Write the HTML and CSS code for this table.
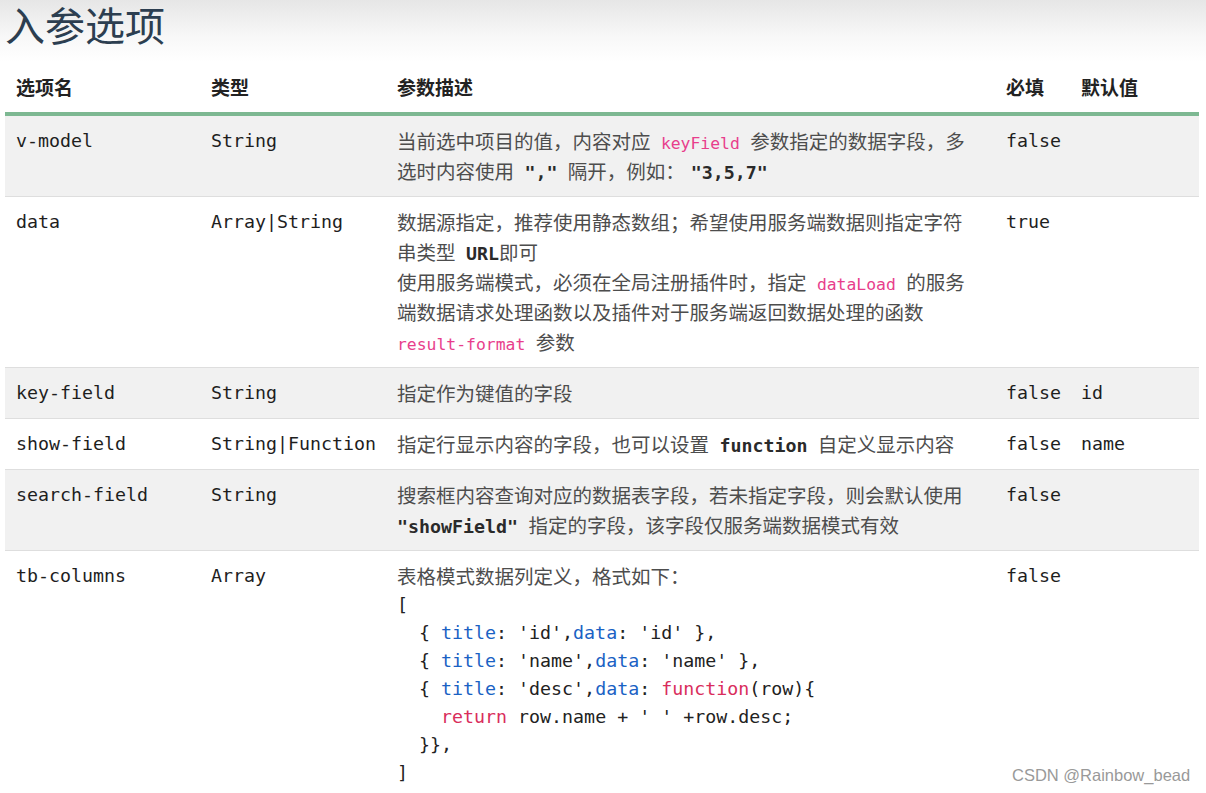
FILE: index.html
```html
<!DOCTYPE html>
<html lang="zh">
<head>
<meta charset="utf-8">
<title>入参选项</title>
<link rel="stylesheet" href="styles.css">
</head>
<body>
<div class="page">
  <h1 class="title">入参选项</h1>
  <table class="opts">
    <colgroup>
      <col class="w1"><col class="w2"><col class="w3"><col class="w4"><col class="w5">
    </colgroup>
    <thead>
      <tr><th>选项名</th><th>类型</th><th>参数描述</th><th>必填</th><th>默认值</th></tr>
    </thead>
    <tbody>
      <tr>
        <td class="mono">v-model</td>
        <td class="mono">String</td>
        <td class="desc">当前选中项目的值，内容对应 <code class="c">keyField</code> 参数指定的数据字段，多<br>选时内容使用 <code class="m">","</code> 隔开，例如：<code class="m">"3,5,7"</code></td>
        <td class="mono">false</td>
        <td class="mono"></td>
      </tr>
      <tr>
        <td class="mono">data</td>
        <td class="mono">Array|String</td>
        <td class="desc">数据源指定，推荐使用静态数组；希望使用服务端数据则指定字符<br>串类型 <code class="m last">URL</code>即可<br>使用服务端模式，必须在全局注册插件时，指定 <code class="c">dataLoad</code> 的服务<br>端数据请求处理函数以及插件对于服务端返回数据处理的函数<br><code class="c first">result-format</code> 参数</td>
        <td class="mono">true</td>
        <td class="mono"></td>
      </tr>
      <tr>
        <td class="mono">key-field</td>
        <td class="mono">String</td>
        <td class="desc">指定作为键值的字段</td>
        <td class="mono">false</td>
        <td class="mono">id</td>
      </tr>
      <tr>
        <td class="mono">show-field</td>
        <td class="mono">String|Function</td>
        <td class="desc">指定行显示内容的字段，也可以设置 <code class="m">function</code> 自定义显示内容</td>
        <td class="mono">false</td>
        <td class="mono">name</td>
      </tr>
      <tr>
        <td class="mono">search-field</td>
        <td class="mono">String</td>
        <td class="desc">搜索框内容查询对应的数据表字段，若未指定字段，则会默认使用<br><code class="m first">"showField"</code> 指定的字段，该字段仅服务端数据模式有效</td>
        <td class="mono">false</td>
        <td class="mono"></td>
      </tr>
      <tr>
        <td class="mono">tb-columns</td>
        <td class="mono">Array</td>
        <td class="desc">表格模式数据列定义，格式如下：
<pre class="code">[
  { <span class="k">title</span>: 'id',<span class="k">data</span>: 'id' },
  { <span class="k">title</span>: 'name',<span class="k">data</span>: 'name' },
  { <span class="k">title</span>: 'desc',<span class="k">data</span>: <span class="r">function</span>(row){
    <span class="r">return</span> row.name + ' ' +row.desc;
  }},
]</pre></td>
        <td class="mono">false</td>
        <td class="mono"></td>
      </tr>
    </tbody>
  </table>
  <div class="mark">CSDN @Rainbow_bead</div>
</div>
</body>
</html>
```

FILE: styles.css
```css
html, body {
  margin: 0;
  padding: 0;
}
html {
  overflow: hidden;
}
body {
  background: linear-gradient(#e6e6e6 0, #f7f7f7 35px, #ffffff 62px) no-repeat;
  background-color: #fff;
  font-family: "Noto Sans CJK SC", "Noto Sans", sans-serif;
  color: #4a4a4a;
}
.page {
  position: relative;
  padding: 0 7px 0 5px;
}
.title {
  margin: 0;
  padding: 0 0 13px;
  height: 49px;
  font-size: 40px;
  line-height: 49px;
  font-weight: 400;
  color: #2c3e50;
}
.opts {
  width: 1194px;
  border-collapse: collapse;
  table-layout: fixed;
}
.w1 { width: 195px; }
.w2 { width: 186px; }
.w3 { width: 609px; }
.w4 { width: 75px; }
.w5 { width: 129px; }
.opts th {
  text-align: left;
  font-weight: 700;
  font-size: 19px;
  color: #222;
  padding: 10px 4px 10px 11px;
  line-height: 30px;
  border-bottom: 4px solid #7db892;
}
.opts td {
  vertical-align: top;
  padding: 10px 4px 10px 11px;
  line-height: 30px;
  border-bottom: 1px solid #dedede;
  font-size: 19.5px;
}
.opts tbody tr:nth-child(odd) td {
  background: #f1f1f1;
}
.mono, code, .code {
  font-family: "DejaVu Sans Mono", "Liberation Mono", monospace;
}
td.mono {
  font-size: 18.3px;
  color: #1e1e1e;
}
.desc {
  color: #4d4d4d;
  white-space: nowrap;
}
code {
  line-height: 1;
  padding: 0 6px;
}
code.first {
  padding-left: 0;
}
code.last {
  padding-right: 0;
}
code.c {
  font-size: 16.4px;
  color: #e83e8c;
}
code.m {
  font-size: 18.3px;
  font-weight: 600;
  color: #2a2a2a;
}
.code {
  margin: 0;
  font-size: 18.3px;
  line-height: 28px;
  color: #222;
  white-space: pre;
}
.k {
  color: #1a62c4;
}
.r {
  color: #d92d5c;
}
.mark {
  position: absolute;
  left: 1012px;
  top: 764px;
  font-family: "Liberation Sans", Arial, sans-serif;
  font-size: 16.5px;
  line-height: 22px;
  color: #999;
  text-shadow: 0 0 2px #fff, 0 0 2px #fff;
  white-space: nowrap;
}
```
